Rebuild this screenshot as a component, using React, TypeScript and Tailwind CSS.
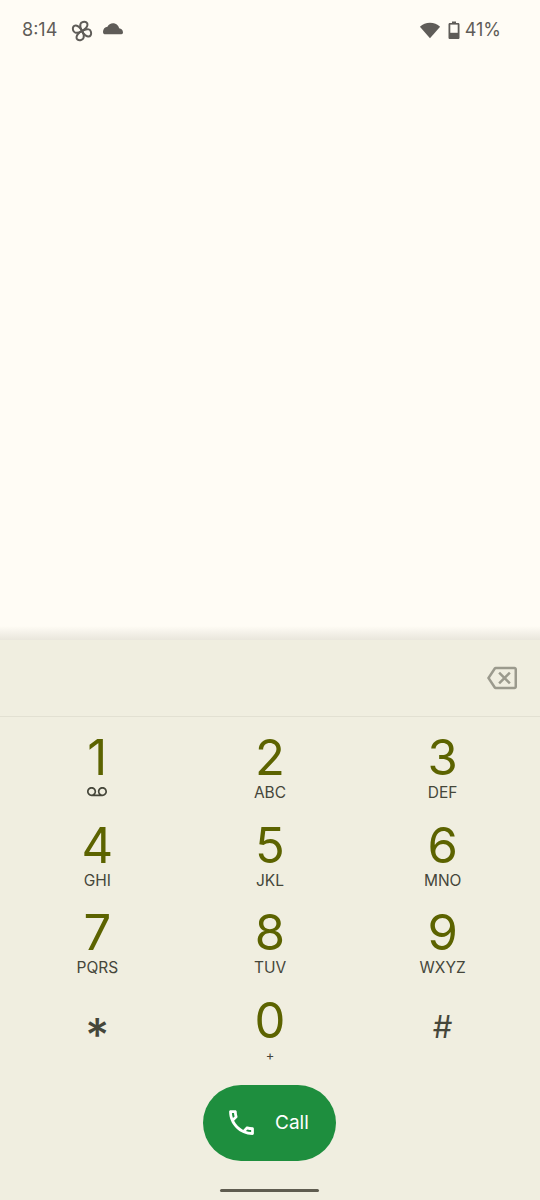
const digitFont = "font-['Inter','Liberation_Sans',sans-serif]";

const keys: { d: string; s?: string }[] = [
  { d: "1", s: "vm" },
  { d: "2", s: "ABC" },
  { d: "3", s: "DEF" },
  { d: "4", s: "GHI" },
  { d: "5", s: "JKL" },
  { d: "6", s: "MNO" },
  { d: "7", s: "PQRS" },
  { d: "8", s: "TUV" },
  { d: "9", s: "WXYZ" },
  { d: "*" },
  { d: "0", s: "+" },
  { d: "#" },
];

const petal = "M12 12C10.6 9.8 9.8 7.4 10.4 5.2C11 3 14.6 2.2 16.4 3.4C18.2 4.6 17.6 7.2 16 9C14.8 10.4 13.4 11.4 12 12Z";

function Voicemail() {
  return (
    <svg width="20" height="20" viewBox="0 0 24 24" fill="#45463a" className="block">
      <path d="M18.5 6C15.46 6 13 8.46 13 11.5c0 1.33.47 2.55 1.26 3.5H9.74c.79-.95 1.26-2.17 1.26-3.5C11 8.46 8.54 6 5.5 6S0 8.46 0 11.5 2.46 17 5.5 17h13c3.04 0 5.5-2.46 5.5-5.5S21.54 6 18.5 6zm-13 9C3.57 15 2 13.43 2 11.5S3.57 8 5.5 8 9 9.57 9 11.5 7.43 15 5.5 15zm13 0c-1.93 0-3.5-1.57-3.5-3.5S16.57 8 18.5 8 22 9.57 22 11.5 20.43 15 18.5 15z" />
    </svg>
  );
}

function Key({ d, s }: { d: string; s?: string }) {
  if (d === "*") {
    return (
      <div className="flex h-[87.7px] justify-center">
        <div className="mt-[37px] h-[36px] text-[46px] font-medium leading-[36px] text-[#45463a]">*</div>
      </div>
    );
  }
  if (d === "#") {
    return (
      <div className="flex h-[87.7px] justify-center">
        <div className="mt-[29px] h-[36px] text-[31px] leading-[36px] text-[#45463a]">#</div>
      </div>
    );
  }
  return (
    <div className="flex h-[87.7px] flex-col items-center">
      <div className="mt-[22px] h-[38px] text-[49px] font-normal leading-[38px] text-[#5c6300]">{d}</div>
      {s === "vm" ? (
        <div className="mt-[4.5px]"><Voicemail /></div>
      ) : s === "+" ? (
        <div className="mt-[7px] h-[16px] text-[13px] leading-[16px] text-[#45463a]">{s}</div>
      ) : (
        <div className="mt-[6px] h-[20px] text-[15.5px] leading-[20px] text-[#45463a]">{s}</div>
      )}
    </div>
  );
}

export default function App() {
  return (
    <div className={`flex h-[1200px] w-[540px] flex-col overflow-hidden bg-[#fffcf5] ${digitFont}`}>
      <div className="flex h-[640px] flex-col">
        <div className="flex h-[60px] items-center pl-[22px] pr-[39px] text-[#5f5c58]">
          <span className="text-[18px] leading-none">8:14</span>
          <svg width="24" height="24" viewBox="0 0 24 24" fill="none" stroke="#5f5c58" strokeWidth="2" strokeLinejoin="round" className="ml-[13px] mt-[2px]">
            <path d={petal} />
            <path d={petal} transform="rotate(90 12 12)" />
            <path d={petal} transform="rotate(180 12 12)" />
            <path d={petal} transform="rotate(270 12 12)" />
          </svg>
          <svg width="20" height="20" viewBox="0 0 24 24" fill="#5f5c58" className="ml-[9px]">
            <path d="M19.35 10.04C18.67 6.59 15.64 4 12 4 9.11 4 6.6 5.64 5.35 8.04 2.34 8.36 0 10.91 0 14c0 1.5.7 3 2 3h20c1.3 0 2-1 2-2 0-2.64-2.05-4.78-4.65-4.96z" />
          </svg>
          <div className="flex-1" />
          <svg width="22" height="22" viewBox="0 0 24 24" fill="#5f5c58" className="mr-[7px]">
            <path d="M12 21 1 8.5C4 5.6 7.8 4 12 4s8 1.6 11 4.5L12 21z" />
          </svg>
          <svg width="12" height="18" viewBox="0 0 12 18" className="mr-[5px]">
            <path d="M4 0.5h4v1.5h2.2c.7 0 1.3.6 1.3 1.3v13.4c0 .7-.6 1.3-1.3 1.3H1.8c-.7 0-1.3-.6-1.3-1.3V3.3C.5 2.6 1.1 2 1.8 2H4z" fill="#5f5c58" />
            <path d="M2.3 3.6h7.4v8.2H2.3z" fill="#fffcf5" />
          </svg>
          <span className="text-[18px] leading-none">41%</span>
        </div>
      </div>
      <div className="relative flex-1 bg-[#f0eee0]">
        <div className="absolute inset-x-0 top-[-14px] h-[14px] bg-gradient-to-b from-transparent to-[#e9e6dc]" />
        <div className="flex h-[77px] items-center justify-end border-b border-[#e2e0d2] pr-[23px]">
          <svg width="30" height="30" viewBox="0 0 24 24" fill="#9b9a8d" className="mb-[1px]">
            <path d="M22 3H7c-.69 0-1.23.35-1.59.88L0 12l5.41 8.11c.36.53.9.89 1.59.89h15c1.1 0 2-.9 2-2V5c0-1.1-.9-2-2-2zm0 16H7.07L2.4 12l4.66-7H22v14zm-11.59-2L14 13.41 17.59 17 19 15.59 15.41 12 19 8.41 17.59 7 14 10.59 10.41 7 9 8.41 12.59 12 9 15.59z" />
          </svg>
        </div>
        <div className="grid grid-cols-3 pl-[11px] pr-[11px]">
          {keys.map((k) => (
            <Key key={k.d} d={k.d} s={k.s} />
          ))}
        </div>
        <div className="mt-[17px] flex flex-col items-center pr-[1px]">
          <div className="flex h-[76px] w-[133px] items-center rounded-full bg-[#1e8e3e] pl-[22px] text-white">
            <svg width="33" height="33" viewBox="0 0 24 24" fill="#ffffff">
              <path d="M6.54 5c.06.89.21 1.76.45 2.59l-1.2 1.2c-.41-1.2-.67-2.47-.76-3.79h1.51m9.86 12.02c.85.24 1.72.39 2.6.45v1.49c-1.32-.09-2.59-.35-3.8-.75l1.2-1.19M7.5 3H4c-.55 0-1 .45-1 1 0 9.39 7.61 17 17 17 .55 0 1-.45 1-1v-3.49c0-.55-.45-1-1-1-1.24 0-2.45-.2-3.57-.57-.1-.04-.21-.05-.31-.05-.26 0-.51.1-.71.29l-2.2 2.2c-2.83-1.45-5.15-3.76-6.59-6.59l2.2-2.2c.28-.28.36-.67.25-1.02C8.7 6.45 8.5 5.25 8.5 4c0-.55-.45-1-1-1z" />
            </svg>
            <span className="ml-[17px] text-[19px] leading-none">Call</span>
          </div>
          <div className="mt-[28px] h-[3px] w-[99px] rounded-full bg-[#5f5c50]" />
        </div>
      </div>
    </div>
  );
}
